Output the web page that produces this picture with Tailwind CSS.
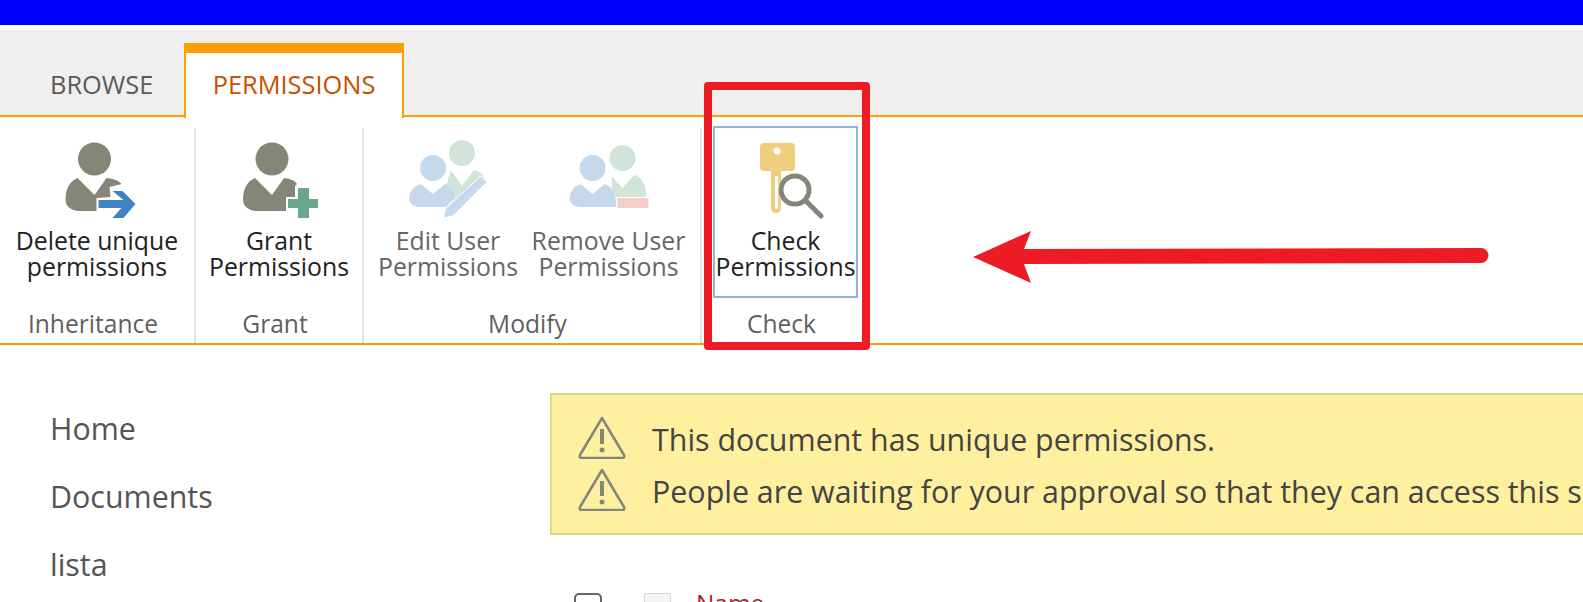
<!DOCTYPE html>
<html lang="en">
<head>
  <meta charset="UTF-8">
  <title>Check Permissions</title>
  <script src="https://cdn.jsdelivr.net/npm/@tailwindcss/browser@4"></script>
</head>
<body class="relative h-[602px] overflow-hidden bg-white font-['Open_Sans',sans-serif] text-[30.4px] text-[#555]">

  <div class="h-[25px] bg-[#0000ff]"></div>

  <!-- tabs -->
  <div class="mt-[5px] flex h-[87px] items-end border-b-2 border-[#ff9e00] bg-[#f0efee] text-[25.4px] leading-[34px]">
    <div class="flex h-[85px] w-[184px] items-center pl-[50px] pt-[22px] text-[#5a5a5a]">BROWSE</div>
    <div class="-mb-[3px] flex h-[75px] w-[220px] items-center justify-center border-x-2 border-t-[10px] border-[#ff9e00] bg-white pb-[4px] text-[#c75000]">PERMISSIONS</div>
  </div>

  <!-- ribbon -->
  <div class="flex h-[228px] items-stretch border-b-2 border-[#ff9e00] pt-[11px] text-[24.8px] leading-[26px]">
    <div class="flex w-[196px] shrink-0 flex-col justify-between border-r-2 border-[#e3e3e3] pb-[6px]">
      <div class="flex flex-col items-center pt-[14px] text-[#222]">
        <svg class="overflow-visible blur-[0.5px]" width="80" height="76" viewBox="57.5 142 80 76">
          <circle cx="95" cy="159" r="16.5" fill="#85857a"/>
          <path d="M78 178 L95 195 L107 178 Q118 179 122 184 L110 187 L111 197 L97 198 L97 211 L78 211 Q66 209 66 200 Q66 183 78 178Z" fill="#85857a"/>
          <path d="M113 191 H123 L136 204 L124 218 H113 L122 208 H99 V200 H124Z" fill="#3f83c3"/>
        </svg>
        <div class="mt-[9px] whitespace-nowrap text-center">Delete unique<br>permissions</div>
      </div>
      <div class="pr-2 text-center text-[24.6px] text-[#5f5f5f]">Inheritance</div>
    </div>

    <div class="flex w-[168px] shrink-0 flex-col justify-between border-r-2 border-[#e3e3e3] pb-[6px]">
      <div class="flex flex-col items-center pt-[14px] text-[#222]">
        <svg class="overflow-visible blur-[0.5px]" width="80" height="76" viewBox="240 142 80 76">
          <circle cx="273" cy="159" r="16.5" fill="#85857a"/>
          <path d="M256 178 L273 195 L285 178 Q295 179 298 184 L296 186 V197 H287 V211 H256 Q244 209 244 200 Q244 183 256 178Z" fill="#85857a"/>
          <path d="M299 188 H310 V199 H319 V208 H310 V218 H299 V208 H289 V199 H299Z" fill="#6ba58a"/>
        </svg>
        <div class="mt-[9px] whitespace-nowrap text-center">Grant<br>Permissions</div>
      </div>
      <div class="pr-2 text-center text-[24.6px] text-[#5f5f5f]">Grant</div>
    </div>

    <div class="flex w-[338px] shrink-0 flex-col justify-between border-r-2 border-[#e3e3e3] pb-[6px]">
      <div class="flex gap-[16px] pl-[16px] text-[#666]">
        <div class="flex w-[136px] flex-col items-center pt-[14px]">
          <svg class="overflow-visible blur-[0.5px]" width="80" height="76" viewBox="408 142 80 76">
            <circle cx="462" cy="153" r="13" fill="#d2e3da"/>
            <path d="M451 170 L462 186 L474 170 Q482 172 484 178 L458 207 L445 190Z" fill="#d2e3da"/>
            <circle cx="433" cy="168" r="13" fill="#c6d9ec"/>
            <path d="M421 184 L433 194 L445 184 Q455 187 455 198 L446 207 H418 Q409 205 409 198 Q410 187 421 184Z" fill="#c6d9ec"/>
            <path d="M481 176 L487 182 L453 216 L443 218 L446 208Z" fill="#c6d9ec" stroke="#fff" stroke-width="1"/>
          </svg>
          <div class="mt-[9px] whitespace-nowrap text-center">Edit User<br>Permissions</div>
        </div>
        <div class="flex w-[153px] flex-col items-center pt-[14px]">
          <svg class="overflow-visible blur-[0.5px]" width="80" height="76" viewBox="568.5 142 80 76">
            <circle cx="622" cy="158" r="13" fill="#d2e3da"/>
            <path d="M611 176 L622 188 L634 175 Q645 178 646 197 H612Z" fill="#d2e3da"/>
            <circle cx="592" cy="168" r="13" fill="#c6d9ec"/>
            <path d="M580 184 L592 194 L604 184 Q615 187 616 207 H578 Q569 205 569 198 Q570 187 580 184Z" fill="#c6d9ec"/>
            <rect x="617" y="198" width="31" height="10" fill="#f4cfc9"/>
          </svg>
          <div class="mt-[9px] whitespace-nowrap text-center">Remove User<br>Permissions</div>
        </div>
      </div>
      <div class="pr-[9px] text-center text-[24.6px] text-[#5f5f5f]">Modify</div>
    </div>

    <div class="flex w-[156px] shrink-0 flex-col justify-between pb-[6px] pl-[11px]">
      <div class="-mt-[2px] flex h-[172px] w-[145px] flex-col items-center border-2 border-[#8fb6d2] pt-[14px] text-[#222]">
        <svg class="overflow-visible blur-[0.5px]" width="80" height="76" viewBox="748 142 80 76">
          <path d="M766 143 H793 Q797 143 797 147 V167 Q797 171 793 171 H783 V208 Q783 213 778 213 Q773 213 773 208 V171 H766 Q762 171 762 167 V147 Q762 143 766 143Z" fill="#eecd7c"/>
          <circle cx="779" cy="151" r="3.5" fill="#fff"/>
          <path d="M777 176 V208 Q778 210 780 208 V176Z" fill="#fff"/>
          <circle cx="797" cy="190" r="17" fill="#fff"/>
          <circle cx="797" cy="190" r="14" fill="#fff" stroke="#85857a" stroke-width="5"/>
          <path d="M808 201 L823 216" stroke="#85857a" stroke-width="5" stroke-linecap="round"/>
        </svg>
        <div class="mt-[9px] whitespace-nowrap text-center">Check<br>Permissions</div>
      </div>
      <div class="pr-[8px] text-center text-[24.6px] text-[#5f5f5f]">Check</div>
    </div>
  </div>

  <!-- page content -->
  <div class="flex">
    <nav class="w-[550px] shrink-0 pl-[50px] pt-[63px] text-[#555]">
      <div class="h-[68px] leading-[42px]">Home</div>
      <div class="h-[68px] leading-[42px]">Documents</div>
      <div class="h-[68px] leading-[42px]">lista</div>
    </nav>
    <div class="min-w-0 flex-1 pt-[48px]">
      <div class="flex h-[142px] flex-col gap-[9px] overflow-hidden border-2 border-r-0 border-[#d6d98a] bg-[#fff0a0] pl-[26px] pt-[21px] text-[#444]">
        <div class="flex h-[43px] items-center gap-[26px] whitespace-nowrap">
          <svg class="shrink-0" width="48" height="43" viewBox="0 0 48 43" fill="none" stroke="#85857a">
            <path d="M24 2 L46 39 Q47 42 44 42 H4 Q1 42 2 39Z" stroke-width="2.5" stroke-linejoin="round"/>
            <path d="M24 13 V28" stroke-width="4"/>
            <circle cx="24" cy="34" r="2.5" fill="#85857a" stroke="none"/>
          </svg>
          <span class="pt-[5px]">This document has unique permissions.</span>
        </div>
        <div class="flex h-[43px] items-center gap-[26px] whitespace-nowrap">
          <svg class="shrink-0" width="48" height="43" viewBox="0 0 48 43" fill="none" stroke="#85857a">
            <path d="M24 2 L46 39 Q47 42 44 42 H4 Q1 42 2 39Z" stroke-width="2.5" stroke-linejoin="round"/>
            <path d="M24 13 V28" stroke-width="4"/>
            <circle cx="24" cy="34" r="2.5" fill="#85857a" stroke="none"/>
          </svg>
          <span class="pt-[5px]">People are waiting for your approval so that they can access this site.</span>
        </div>
      </div>
      <div class="mt-[58px] flex items-start pl-[24px]">
        <div class="h-[28px] w-[28px] shrink-0 rounded-[5px] border-2 border-[#666]"></div>
        <div class="ml-[42px] h-[28px] w-[27px] shrink-0 rounded-[2px] border border-[#d5d5d5] bg-[#f4f4f4]"></div>
        <div class="-mt-[5px] ml-[25px] text-[24.4px] leading-[30px] text-[#a4262c]">Name</div>
      </div>
    </div>
  </div>

  <!-- annotation over the screenshot -->
  <div class="absolute left-[704px] top-[82px] h-[268px] w-[166px] rounded-[4px] border-8 border-[#ed1c24]"></div>
  <svg class="absolute left-[970px] top-[228px]" width="522" height="58" viewBox="970 228 522 58">
    <path d="M973 257 L1031 231 L1024 249 L1481 248 A7.5 7.5 0 0 1 1481 263 L1024 264 L1031 283Z" fill="#ed1c24"/>
  </svg>

</body>
</html>
